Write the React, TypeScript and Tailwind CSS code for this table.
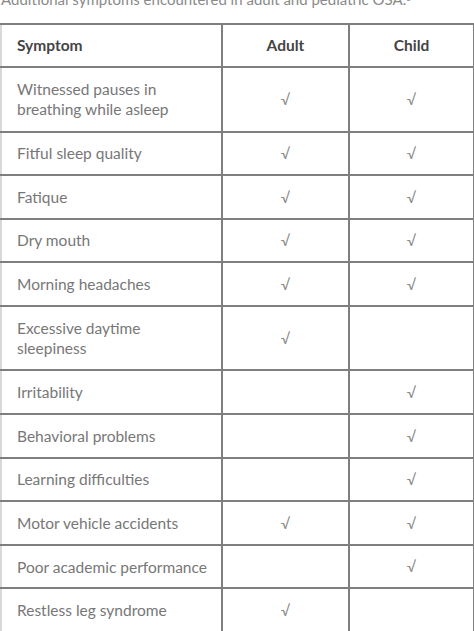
import React from 'react';

type Row = { symptom: string; adult: boolean; child: boolean; tall?: boolean };

const rows: Row[] = [
  { symptom: 'Witnessed pauses in breathing while asleep', adult: true, child: true, tall: true },
  { symptom: 'Fitful sleep quality', adult: true, child: true },
  { symptom: 'Fatique', adult: true, child: true },
  { symptom: 'Dry mouth', adult: true, child: true },
  { symptom: 'Morning headaches', adult: true, child: true },
  { symptom: 'Excessive daytime sleepiness', adult: true, child: false, tall: true },
  { symptom: 'Irritability', adult: false, child: true },
  { symptom: 'Behavioral problems', adult: false, child: true },
  { symptom: 'Learning difficulties', adult: false, child: true },
  { symptom: 'Motor vehicle accidents', adult: true, child: true },
  { symptom: 'Poor academic performance', adult: false, child: true },
  { symptom: 'Restless leg syndrome', adult: true, child: false },
];

const Check: React.FC<{ on: boolean }> = ({ on }) => (
  <td className="border-2 border-[#7f7f7f] text-center align-middle text-[15px] text-[#8a8a8a]">
    {on ? '√' : ''}
  </td>
);

const App: React.FC = () => {
  return (
    <div className="w-[474px] h-[631px] overflow-hidden bg-white font-['Lato','Noto_Sans',sans-serif]">
      <p className="-mt-[11px] pl-[1px] text-[15px] leading-[20px] text-[#8a8a8a]">
        Additional symptoms encountered in adult and pediatric OSA.<sup className="text-[9px]">5</sup>
      </p>
      <table className="mt-[14px] w-[473px] table-fixed border-collapse">
        <colgroup>
          <col className="w-[221px]" />
          <col className="w-[127px]" />
          <col className="w-[125px]" />
        </colgroup>
        <thead>
          <tr className="h-[43px]">
            <th className="border-2 border-[#7f7f7f] border-l-[#d9d9d9] pl-[15px] text-left text-[15.5px] font-bold text-[#444]">
              Symptom
            </th>
            <th className="border-2 border-[#7f7f7f] text-center text-[15.5px] font-bold text-[#444]">Adult</th>
            <th className="border-2 border-[#7f7f7f] text-center text-[15.5px] font-bold text-[#444]">Child</th>
          </tr>
        </thead>
        <tbody>
          {rows.map((r) => (
            <tr key={r.symptom} className={r.tall ? 'h-[64.5px]' : 'h-[43.6px]'}>
              <td className="border-2 border-[#7f7f7f] border-l-[#d9d9d9] pl-[15px] pr-[10px] align-middle text-[15.5px] leading-[20px] text-[#777]">
                {r.symptom}
              </td>
              <Check on={r.adult} />
              <Check on={r.child} />
            </tr>
          ))}
        </tbody>
      </table>
    </div>
  );
};

export default App;
